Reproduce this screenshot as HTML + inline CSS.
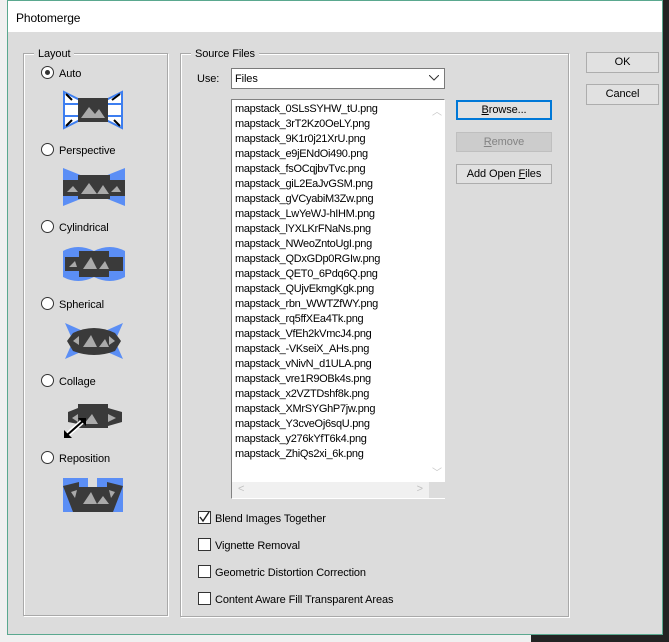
<!DOCTYPE html>
<html><head><meta charset="utf-8"><style>
*{margin:0;padding:0;box-sizing:border-box}
body{width:669px;height:642px;position:relative;background:#f0f0f0;font-family:"Liberation Sans",sans-serif;font-size:11px;letter-spacing:-0.1px;color:#000;overflow:hidden}
.abs{position:absolute}
#dark{left:531px;top:635px;width:138px;height:7px;background:#232323}
#dark2{left:663px;top:0;width:6px;height:642px;background:#232323}
#win{left:7px;top:0;width:656px;height:635px;background:#dcdcdc;border:1px solid #5aa88f}
#title{left:0;top:0;width:654px;height:31px;background:#fff;font-size:12px;padding:10px 0 0 8px}
.grp{border:1px solid #a9a9a9;box-shadow:inset 1px 1px 0 #fff,1px 1px 0 #fff}
.leg{background:#dcdcdc;padding:0 4px;line-height:13px}
.radio{width:13px;height:13px;border:1px solid #333;border-radius:50%;background:#fff}
.btn{border:1px solid #adadad;background:#e1e1e1;text-align:center;line-height:19px}
.cb{width:13px;height:13px;border:1px solid #333;background:#fff}
.row{position:absolute;left:3px;line-height:15px;letter-spacing:-0.3px}
</style></head><body>
<div class="abs" id="dark"></div><div class="abs" id="dark2"></div>
<div class="abs" id="win">
<div class="abs" id="title">Photomerge</div>
</div>
<div class="abs grp" style="left:23px;top:53px;width:145px;height:563px"></div>
<div class="abs leg" style="left:34px;top:48px">Layout</div>
<div class="abs radio" style="left:41px;top:66px"><div style="width:5px;height:5px;background:#333;border-radius:50%;margin:3px"></div></div>
<div class="abs" style="left:59px;top:68px">Auto</div>
<div class="abs radio" style="left:41px;top:143px"></div><div class="abs" style="left:59px;top:145px">Perspective</div>
<div class="abs radio" style="left:41px;top:220px"></div><div class="abs" style="left:59px;top:222px">Cylindrical</div>
<div class="abs radio" style="left:41px;top:297px"></div><div class="abs" style="left:59px;top:299px">Spherical</div>
<div class="abs radio" style="left:41px;top:374px"></div><div class="abs" style="left:59px;top:376px">Collage</div>
<div class="abs radio" style="left:41px;top:451px"></div><div class="abs" style="left:59px;top:453px">Reposition</div>
<svg class="abs" style="left:60px;top:88px" width="66" height="44" viewBox="0 0 66 44">
<path d="M4 4 L20 12 L46 12 L62 4 L62 40 L46 32 L20 32 L4 40Z" fill="#fff" stroke="#3d7ef0" stroke-width="2"/>
<path d="M4 16 L18 16 M4 28 L18 28 M48 16 L62 16 M48 28 L62 28" stroke="#3d7ef0" stroke-width="2"/>
<rect x="18" y="10" width="30" height="24" fill="#3a3a3a"/>
<path d="M21 30 L29 19 L35 26 L39 21 L45 30Z" fill="#aaa"/>
<path d="M6 6 L12 12 M52 12 L60 6 M6 38 L12 32 M54 32 L60 38" stroke="#000" stroke-width="2"/>
</svg>
<svg class="abs" style="left:63px;top:168px" width="62" height="40" viewBox="0 0 62 40">
<path d="M0 0 L20 8 L42 8 L62 0 L62 38 L42 30 L20 30 L0 38Z" fill="#5b8ef5"/>
<rect x="0" y="12" width="62" height="16" fill="#3a3a3a"/><rect x="15" y="7" width="32" height="24" fill="#3a3a3a"/>
<path d="M4 24 L10 18 L15 24Z M18 26 L26 15 L34 26Z M34 26 L40 17 L46 26Z M48 24 L54 18 L58 24Z" fill="#aaa"/>
</svg>
<svg class="abs" style="left:63px;top:245px" width="62" height="38" viewBox="0 0 62 38">
<path d="M0 6 Q15 -2 31 6 Q47 -2 62 6 L62 32 Q47 40 31 32 Q15 40 0 32Z" fill="#5b8ef5"/>
<rect x="2" y="12" width="58" height="14" fill="#3a3a3a"/><rect x="16" y="6" width="30" height="26" fill="#3a3a3a"/>
<path d="M6 22 L12 16 L14 22Z M20 24 L28 12 L34 24Z M36 24 L42 16 L46 24Z" fill="#aaa"/>
</svg>
<svg class="abs" style="left:63px;top:323px" width="62" height="38" viewBox="0 0 62 38">
<path d="M2 0 L20 8 L42 8 L60 0 L52 18 L60 36 L42 28 L20 28 L2 36 L10 18Z" fill="#5b8ef5"/>
<path d="M10 10 Q31 0 52 10 L58 18 L52 28 Q31 36 10 28 L4 18Z" fill="#3a3a3a"/>
<path d="M10 18 L16 13 L16 22Z M20 24 L28 12 L34 24Z M36 24 L42 16 L46 24Z M52 18 L46 13 L46 22Z" fill="#aaa"/>
</svg>
<svg class="abs" style="left:62px;top:404px" width="64" height="36" viewBox="0 0 64 36">
<path d="M6 8 L16 4 L16 0 L46 0 L46 4 L60 8 L60 18 L46 22 L46 24 L16 24 L16 20 L6 18Z" fill="#3a3a3a"/>
<path d="M10 14 L16 10 L16 18Z M22 20 L30 10 L36 20Z M46 10 L54 14 L46 18Z" fill="#aaa"/>
<path d="M4 32 L22 16" stroke="#fff" stroke-width="5"/><path d="M4 32 L22 16" stroke="#000" stroke-width="2"/>
<path d="M2 34 L2 26 L10 34Z M24 14 L24 22 L16 14Z" fill="#000"/>
</svg>
<svg class="abs" style="left:63px;top:478px" width="60" height="34" viewBox="0 0 60 34">
<rect x="0" y="0" width="60" height="34" fill="#5b8ef5"/><rect x="25" y="0" width="9" height="9" fill="#dcdcdc"/>
<path d="M0 8 L16 4 L16 9 L44 9 L44 4 L60 8 L50 34 L10 34Z" fill="#3a3a3a"/>
<path d="M8 14 L14 12 L12 20Z M20 26 L28 14 L34 26Z M34 26 L40 18 L46 26Z M52 14 L46 12 L48 20Z" fill="#aaa"/>
</svg>
<div class="abs grp" style="left:180px;top:53px;width:389px;height:564px"></div>
<div class="abs leg" style="left:191px;top:48px">Source Files</div>
<div class="abs" style="left:197px;top:73px">Use:</div>
<div class="abs" style="left:231px;top:68px;width:214px;height:21px;background:#fff;border:1px solid #7a7a7a;padding:4px 0 0 3px">Files<svg class="abs" style="right:5px;top:6px" width="10" height="6"><path d="M0 0 L5 5 L10 0" fill="none" stroke="#333"/></svg></div>
<div class="abs" style="left:231px;top:99px;width:214px;height:400px;background:#fff;border:1px solid #828282;border-right-color:#fff;border-bottom-color:#fff">
<div class="row" style="top:2px">mapstack_0SLsSYHW_tU.png</div>
<div class="row" style="top:17px">mapstack_3rT2Kz0OeLY.png</div>
<div class="row" style="top:32px">mapstack_9K1r0j21XrU.png</div>
<div class="row" style="top:47px">mapstack_e9jENdOi490.png</div>
<div class="row" style="top:62px">mapstack_fsOCqjbvTvc.png</div>
<div class="row" style="top:77px">mapstack_giL2EaJvGSM.png</div>
<div class="row" style="top:92px">mapstack_gVCyabiM3Zw.png</div>
<div class="row" style="top:107px">mapstack_LwYeWJ-hIHM.png</div>
<div class="row" style="top:122px">mapstack_lYXLKrFNaNs.png</div>
<div class="row" style="top:137px">mapstack_NWeoZntoUgI.png</div>
<div class="row" style="top:152px">mapstack_QDxGDp0RGIw.png</div>
<div class="row" style="top:167px">mapstack_QET0_6Pdq6Q.png</div>
<div class="row" style="top:182px">mapstack_QUjvEkmgKgk.png</div>
<div class="row" style="top:197px">mapstack_rbn_WWTZfWY.png</div>
<div class="row" style="top:212px">mapstack_rq5ffXEa4Tk.png</div>
<div class="row" style="top:227px">mapstack_VfEh2kVmcJ4.png</div>
<div class="row" style="top:242px">mapstack_-VKseiX_AHs.png</div>
<div class="row" style="top:257px">mapstack_vNivN_d1ULA.png</div>
<div class="row" style="top:272px">mapstack_vre1R9OBk4s.png</div>
<div class="row" style="top:287px">mapstack_x2VZTDshf8k.png</div>
<div class="row" style="top:302px">mapstack_XMrSYGhP7jw.png</div>
<div class="row" style="top:317px">mapstack_Y3cveOj6sqU.png</div>
<div class="row" style="top:332px">mapstack_y276kYfT6k4.png</div>
<div class="row" style="top:347px">mapstack_ZhiQs2xi_6k.png</div>
<div class="abs" style="left:0;top:382px;width:197px;height:16px;background:#f0f0f0;color:#c0c0c0;font-size:11px"><span style="position:absolute;left:6px;top:1px">&lt;</span><span style="position:absolute;right:6px;top:1px">&gt;</span></div>
<div class="abs" style="left:197px;top:382px;width:16px;height:16px;background:#dcdcdc"></div>
<div class="abs" style="left:197px;top:0;width:16px;height:382px;color:#c8c8c8;font-size:10px"><span style="position:absolute;left:3px;top:3px">︿</span><span style="position:absolute;left:3px;bottom:3px">﹀</span></div>
</div>
<div class="abs btn" style="left:456px;top:100px;width:96px;height:20px;border:2px solid #0078d7;line-height:17px"><u>B</u>rowse...</div>
<div class="abs btn" style="left:456px;top:132px;width:96px;height:20px;background:#ccc;color:#838383;border-color:#bfbfbf"><u>R</u>emove</div>
<div class="abs btn" style="left:456px;top:164px;width:96px;height:20px">Add Open <u>F</u>iles</div>
<div class="abs btn" style="left:586px;top:52px;width:73px;height:21px">OK</div>
<div class="abs btn" style="left:586px;top:84px;width:73px;height:21px">Cancel</div>
<div class="abs cb" style="left:198px;top:511px"><svg width="11" height="11" style="display:block"><path d="M1 5 L4 9 L10 0" fill="none" stroke="#222" stroke-width="1.4"/></svg></div>
<div class="abs" style="left:215px;top:513px">Blend Images Together</div>
<div class="abs cb" style="left:198px;top:538px"></div><div class="abs" style="left:215px;top:540px">Vignette Removal</div>
<div class="abs cb" style="left:198px;top:565px"></div><div class="abs" style="left:215px;top:567px">Geometric Distortion Correction</div>
<div class="abs cb" style="left:198px;top:592px"></div><div class="abs" style="left:215px;top:594px">Content Aware Fill Transparent Areas</div>
</body></html>
